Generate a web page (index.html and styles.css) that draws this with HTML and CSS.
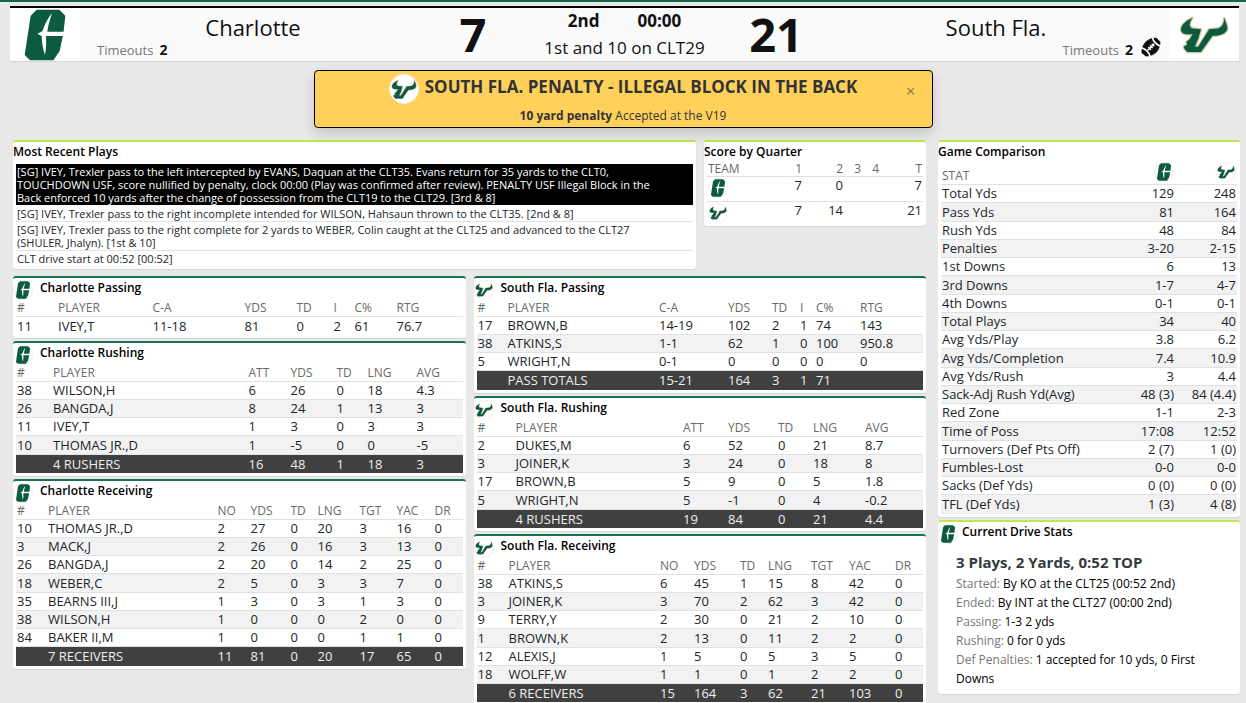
FILE: index.html
```html
<!DOCTYPE html>
<html lang="en">
<head>
<meta charset="utf-8">
<title>Charlotte vs South Fla.</title>
<link rel="stylesheet" href="styles.css">
</head>
<body>
<svg class="sprite" aria-hidden="true">
  <symbol id="clt" viewBox="74 26 126 156">
    <path fill="#0b5a41" d="M112 28H180L198 46L192 100L181 152L162 180H92L76 164L94 46Z"/>
    <path fill="#fff" d="M158 38Q139 62 129 93L114 100L127 107Q128 140 137 163Q142 140 140 107H200V94H144Q146 75 158 38Z"/>
  </symbol>
  <symbol id="usf" viewBox="2 8 146 112">
    <path class="bull" d="M41 14C26 20 6 34 8 50C10 61 24 64 42 61L34 76L24 84L26 92L16 98L18 104L26 114H66L80 94L100 66H112C128 64 144 56 143 42C142 34 138 26 134 14C134 30 128 40 116 45L90 47L76 70L58 98H48L58 76L66 47L42 45C30 40 31 30 41 14Z"/>
  </symbol>
  <symbol id="ball" viewBox="0 0 60 60">
    <path fill="#111" d="M2 48C-2 24 20 0 46 2L58 14C60 38 40 60 14 58Z"/>
    <path fill="none" stroke="#fff" stroke-width="5" d="M0 32Q22 38 28 60M34 0Q38 20 60 28"/>
    <path fill="none" stroke="#fff" stroke-width="4" d="M20 40L40 20M22 30L30 38M27 25L35 33M32 20L40 28"/>
  </symbol>
</svg>

<header class="scoreboard">
  <div class="team-logo"><svg class="logo-clt"><use href="#clt"/></svg></div>
  <div class="team">
    <h1 class="team-name">Charlotte</h1>
    <p class="timeouts">Timeouts <b>2</b></p>
  </div>
  <div class="score">7</div>
  <div class="situation">
    <p class="clock"><span>2nd</span><span>00:00</span></p>
    <p class="down">1st and 10 on CLT29</p>
  </div>
  <div class="score">21</div>
  <div class="team team-away">
    <h1 class="team-name">South Fla.</h1>
    <p class="timeouts">Timeouts <b>2</b> <svg class="ball" role="img" aria-label="Possession"><use href="#ball"/></svg></p>
  </div>
  <div class="team-logo"><svg class="logo-usf"><use href="#usf"/></svg></div>
</header>

<div class="alert" role="alert">
  <div class="alert-title"><span class="badge badge-lg"><svg><use href="#usf"/></svg></span><strong>SOUTH FLA. PENALTY - ILLEGAL BLOCK IN THE BACK</strong></div>
  <p class="alert-text"><b>10 yard penalty</b> Accepted at the V19</p>
  <button class="close" type="button" aria-label="Close">×</button>
</div>

<main class="page">
  <div class="main">
    <div class="top-row">
      <section class="panel lime">
        <h2>Most Recent Plays</h2>
        <ul class="plays">
          <li class="latest">[SG] IVEY, Trexler pass to the left intercepted by EVANS, Daquan at the CLT35. Evans return for 35 yards to the CLT0, TOUCHDOWN USF, score nullified by penalty, clock 00:00 (Play was confirmed after review). PENALTY USF Illegal Block in the Back enforced 10 yards after the change of possession from the CLT19 to the CLT29. [3rd &amp; 8]</li>
          <li>[SG] IVEY, Trexler pass to the right incomplete intended for WILSON, Hahsaun thrown to the CLT35. [2nd &amp; 8]</li>
          <li>[SG] IVEY, Trexler pass to the right complete for 2 yards to WEBER, Colin caught at the CLT25 and advanced to the CLT27 (SHULER, Jhalyn). [1st &amp; 10]</li>
          <li>CLT drive start at 00:52 [00:52]</li>
        </ul>
      </section>
      <section class="panel lime">
        <h2>Score by Quarter</h2>
        <table class="quarters">
          <thead><tr><th>TEAM</th><th>1</th><th>2</th><th>3</th><th>4</th><th>T</th></tr></thead>
          <tbody>
            <tr><td><span class="badge"><svg><use href="#clt"/></svg></span></td><td>7</td><td>0</td><td></td><td></td><td>7</td></tr>
            <tr><td><span class="badge"><svg><use href="#usf"/></svg></span></td><td>7</td><td>14</td><td></td><td></td><td>21</td></tr>
          </tbody>
        </table>
      </section>
    </div>

    <div class="teams-row">
      <div class="stack">
        <section class="panel">
          <h2><span class="badge"><svg><use href="#clt"/></svg></span>Charlotte Passing</h2>
          <table class="stats clt-pass">
            <thead><tr><th>#</th><th>PLAYER</th><th>C-A</th><th>YDS</th><th>TD</th><th>I</th><th>C%</th><th>RTG</th></tr></thead>
            <tbody><tr><td>11</td><td>IVEY,T</td><td>11-18</td><td>81</td><td>0</td><td>2</td><td>61</td><td>76.7</td></tr></tbody>
          </table>
        </section>
        <section class="panel">
          <h2><span class="badge"><svg><use href="#clt"/></svg></span>Charlotte Rushing</h2>
          <table class="stats clt-rush">
            <thead><tr><th>#</th><th>PLAYER</th><th>ATT</th><th>YDS</th><th>TD</th><th>LNG</th><th>AVG</th></tr></thead>
            <tbody>
              <tr><td>38</td><td>WILSON,H</td><td>6</td><td>26</td><td>0</td><td>18</td><td>4.3</td></tr>
              <tr><td>26</td><td>BANGDA,J</td><td>8</td><td>24</td><td>1</td><td>13</td><td>3</td></tr>
              <tr><td>11</td><td>IVEY,T</td><td>1</td><td>3</td><td>0</td><td>3</td><td>3</td></tr>
              <tr><td>10</td><td>THOMAS JR.,D</td><td>1</td><td>-5</td><td>0</td><td>0</td><td>-5</td></tr>
              <tr class="total"><td></td><td>4 RUSHERS</td><td>16</td><td>48</td><td>1</td><td>18</td><td>3</td></tr>
            </tbody>
          </table>
        </section>
        <section class="panel">
          <h2><span class="badge"><svg><use href="#clt"/></svg></span>Charlotte Receiving</h2>
          <table class="stats clt-rec">
            <thead><tr><th>#</th><th>PLAYER</th><th>NO</th><th>YDS</th><th>TD</th><th>LNG</th><th>TGT</th><th>YAC</th><th>DR</th></tr></thead>
            <tbody>
              <tr><td>10</td><td>THOMAS JR.,D</td><td>2</td><td>27</td><td>0</td><td>20</td><td>3</td><td>16</td><td>0</td></tr>
              <tr><td>3</td><td>MACK,J</td><td>2</td><td>26</td><td>0</td><td>16</td><td>3</td><td>13</td><td>0</td></tr>
              <tr><td>26</td><td>BANGDA,J</td><td>2</td><td>20</td><td>0</td><td>14</td><td>2</td><td>25</td><td>0</td></tr>
              <tr><td>18</td><td>WEBER,C</td><td>2</td><td>5</td><td>0</td><td>3</td><td>3</td><td>7</td><td>0</td></tr>
              <tr><td>35</td><td>BEARNS III,J</td><td>1</td><td>3</td><td>0</td><td>3</td><td>1</td><td>3</td><td>0</td></tr>
              <tr><td>38</td><td>WILSON,H</td><td>1</td><td>0</td><td>0</td><td>0</td><td>2</td><td>0</td><td>0</td></tr>
              <tr><td>84</td><td>BAKER II,M</td><td>1</td><td>0</td><td>0</td><td>0</td><td>1</td><td>1</td><td>0</td></tr>
              <tr class="total"><td></td><td>7 RECEIVERS</td><td>11</td><td>81</td><td>0</td><td>20</td><td>17</td><td>65</td><td>0</td></tr>
            </tbody>
          </table>
        </section>
      </div>

      <div class="stack">
        <section class="panel">
          <h2><span class="badge"><svg><use href="#usf"/></svg></span>South Fla. Passing</h2>
          <table class="stats usf-pass">
            <thead><tr><th>#</th><th>PLAYER</th><th>C-A</th><th>YDS</th><th>TD</th><th>I</th><th>C%</th><th>RTG</th></tr></thead>
            <tbody>
              <tr><td>17</td><td>BROWN,B</td><td>14-19</td><td>102</td><td>2</td><td>1</td><td>74</td><td>143</td></tr>
              <tr><td>38</td><td>ATKINS,S</td><td>1-1</td><td>62</td><td>1</td><td>0</td><td>100</td><td>950.8</td></tr>
              <tr><td>5</td><td>WRIGHT,N</td><td>0-1</td><td>0</td><td>0</td><td>0</td><td>0</td><td>0</td></tr>
              <tr class="total"><td></td><td>PASS TOTALS</td><td>15-21</td><td>164</td><td>3</td><td>1</td><td>71</td><td></td></tr>
            </tbody>
          </table>
        </section>
        <section class="panel">
          <h2><span class="badge"><svg><use href="#usf"/></svg></span>South Fla. Rushing</h2>
          <table class="stats usf-rush">
            <thead><tr><th>#</th><th>PLAYER</th><th>ATT</th><th>YDS</th><th>TD</th><th>LNG</th><th>AVG</th></tr></thead>
            <tbody>
              <tr><td>2</td><td>DUKES,M</td><td>6</td><td>52</td><td>0</td><td>21</td><td>8.7</td></tr>
              <tr><td>3</td><td>JOINER,K</td><td>3</td><td>24</td><td>0</td><td>18</td><td>8</td></tr>
              <tr><td>17</td><td>BROWN,B</td><td>5</td><td>9</td><td>0</td><td>5</td><td>1.8</td></tr>
              <tr><td>5</td><td>WRIGHT,N</td><td>5</td><td>-1</td><td>0</td><td>4</td><td>-0.2</td></tr>
              <tr class="total"><td></td><td>4 RUSHERS</td><td>19</td><td>84</td><td>0</td><td>21</td><td>4.4</td></tr>
            </tbody>
          </table>
        </section>
        <section class="panel">
          <h2><span class="badge"><svg><use href="#usf"/></svg></span>South Fla. Receiving</h2>
          <table class="stats usf-rec">
            <thead><tr><th>#</th><th>PLAYER</th><th>NO</th><th>YDS</th><th>TD</th><th>LNG</th><th>TGT</th><th>YAC</th><th>DR</th></tr></thead>
            <tbody>
              <tr><td>38</td><td>ATKINS,S</td><td>6</td><td>45</td><td>1</td><td>15</td><td>8</td><td>42</td><td>0</td></tr>
              <tr><td>3</td><td>JOINER,K</td><td>3</td><td>70</td><td>2</td><td>62</td><td>3</td><td>42</td><td>0</td></tr>
              <tr><td>9</td><td>TERRY,Y</td><td>2</td><td>30</td><td>0</td><td>21</td><td>2</td><td>10</td><td>0</td></tr>
              <tr><td>1</td><td>BROWN,K</td><td>2</td><td>13</td><td>0</td><td>11</td><td>2</td><td>2</td><td>0</td></tr>
              <tr><td>12</td><td>ALEXIS,J</td><td>1</td><td>5</td><td>0</td><td>5</td><td>3</td><td>5</td><td>0</td></tr>
              <tr><td>18</td><td>WOLFF,W</td><td>1</td><td>1</td><td>0</td><td>1</td><td>2</td><td>2</td><td>0</td></tr>
              <tr class="total"><td></td><td>6 RECEIVERS</td><td>15</td><td>164</td><td>3</td><td>62</td><td>21</td><td>103</td><td>0</td></tr>
            </tbody>
          </table>
        </section>
      </div>
    </div>
  </div>

  <aside class="stack">
    <section class="panel lime">
      <h2>Game Comparison</h2>
      <table class="stats compare">
        <thead><tr><th>STAT</th><th><span class="badge"><svg><use href="#clt"/></svg></span></th><th><span class="badge"><svg><use href="#usf"/></svg></span></th></tr></thead>
        <tbody>
          <tr><td>Total Yds</td><td>129</td><td>248</td></tr>
          <tr><td>Pass Yds</td><td>81</td><td>164</td></tr>
          <tr><td>Rush Yds</td><td>48</td><td>84</td></tr>
          <tr><td>Penalties</td><td>3-20</td><td>2-15</td></tr>
          <tr><td>1st Downs</td><td>6</td><td>13</td></tr>
          <tr><td>3rd Downs</td><td>1-7</td><td>4-7</td></tr>
          <tr><td>4th Downs</td><td>0-1</td><td>0-1</td></tr>
          <tr><td>Total Plays</td><td>34</td><td>40</td></tr>
          <tr><td>Avg Yds/Play</td><td>3.8</td><td>6.2</td></tr>
          <tr><td>Avg Yds/Completion</td><td>7.4</td><td>10.9</td></tr>
          <tr><td>Avg Yds/Rush</td><td>3</td><td>4.4</td></tr>
          <tr><td>Sack-Adj Rush Yd(Avg)</td><td>48 (3)</td><td>84 (4.4)</td></tr>
          <tr><td>Red Zone</td><td>1-1</td><td>2-3</td></tr>
          <tr><td>Time of Poss</td><td>17:08</td><td>12:52</td></tr>
          <tr><td>Turnovers (Def Pts Off)</td><td>2 (7)</td><td>1 (0)</td></tr>
          <tr><td>Fumbles-Lost</td><td>0-0</td><td>0-0</td></tr>
          <tr><td>Sacks (Def Yds)</td><td>0 (0)</td><td>0 (0)</td></tr>
          <tr><td>TFL (Def Yds)</td><td>1 (3)</td><td>4 (8)</td></tr>
        </tbody>
      </table>
    </section>
    <section class="panel lime">
      <h2 class="tight"><span class="badge"><svg><use href="#clt"/></svg></span>Current Drive Stats</h2>
      <div class="drive">
        <h3>3 Plays, 2 Yards, 0:52 TOP</h3>
        <p><span>Started:</span> By KO at the CLT25 (00:52 2nd)</p>
        <p><span>Ended:</span> By INT at the CLT27 (00:00 2nd)</p>
        <p><span>Passing:</span> 1-3 2 yds</p>
        <p><span>Rushing:</span> 0 for 0 yds</p>
        <p><span>Def Penalties:</span> 1 accepted for 10 yds, 0 First Downs</p>
      </div>
    </section>
  </aside>
</main>
</body>
</html>
```
FILE: styles.css
```css
* { box-sizing: border-box; }
body {
  margin: 0;
  border-top: 2px solid #156648;
  background: #e9e9e9;
  color: #212529;
  font: 13px/18px "Open Sans", "Noto Sans", sans-serif;
}
h1, h2, h3, p, ul { margin: 0; padding: 0; font-weight: inherit; }
svg { display: block; }
.sprite { display: none; }
.bull { fill: #0b5a41; stroke: #cfc49c; stroke-width: 7; paint-order: stroke; stroke-linejoin: round; }

/* scoreboard */
.scoreboard {
  display: grid;
  grid-template-columns: 70px 346fr 94fr 209fr 94fr 346fr 70px;
  margin: 4px 7px 0 10px;
  height: 55px;
  border-top: 2px solid #000;
  background: #fafafa;
  color: #111;
  box-shadow: 0 1px 1px #d8d8d8;
}
.team-logo { display: flex; align-items: center; justify-content: center; background: #fff; }
.logo-clt { width: 42px; height: 52px; }
.logo-usf { width: 50px; height: 40px; }
.team { display: flex; flex-direction: column; }
.team-name { font-size: 22px; line-height: 24px; padding: 7px 0 1px; text-align: center; }
.timeouts { display: flex; align-items: center; gap: 6px; height: 20px; padding-left: 17px; font-size: 13px; color: #777; }
.timeouts b { font-size: 14px; color: #111; }
.team-away .timeouts { justify-content: flex-end; padding: 0 8px 0 0; }
.ball { width: 20px; height: 20px; margin: 0 0 6px 2px; }
.score { font-size: 47px; font-weight: 700; line-height: 52px; text-align: center; }
.situation { display: flex; flex-direction: column; align-items: center; gap: 4px; white-space: nowrap; }
.clock { display: flex; gap: 38px; font-size: 17px; line-height: 26px; font-weight: 700; }
.down { font-size: 17px; line-height: 20px; }

/* penalty alert */
.alert {
  position: relative;
  width: 619px;
  max-width: 100%;
  margin: 9px auto 12px;
  padding: 3px 0 2px;
  border: 1px solid #000;
  border-radius: 4px;
  background: #ffd15b;
  color: #333;
  text-align: center;
  box-shadow: 0 6px 14px rgba(0, 0, 0, .16);
}
.alert-title { display: flex; align-items: center; justify-content: center; gap: 6px; font-size: 17px; line-height: 30px; }
.alert-title strong { line-height: 26px; padding-bottom: 4px; }
.alert-text { padding-top: 2px; font-size: 12px; line-height: 19px; }
.close {
  position: absolute;
  top: 10px;
  right: 16px;
  padding: 0;
  border: 0;
  background: none;
  color: #8b7638;
  font: 17px/20px "Open Sans", sans-serif;
}

/* panels */
.page {
  display: grid;
  grid-template-columns: 913fr 302fr;
  align-items: start;
  gap: 12px;
  padding: 0 6px 0 13px;
}
.main { display: flex; flex-direction: column; gap: 7px; }
.top-row { display: grid; grid-template-columns: 683fr 222fr; align-items: start; gap: 8px; }
.teams-row { display: grid; grid-template-columns: 1fr 1fr; align-items: start; gap: 8px; }
.stack { display: flex; flex-direction: column; gap: 3px; min-width: 0; }
.panel {
  padding: 0 3px 3px;
  border-top: 2px solid #1a7350;
  border-radius: 3px;
  background: #fff;
  box-shadow: 0 1px 1px #d5d5d5;
}
.lime { border-top-color: #bfe94a; }
.panel h2 {
  display: flex;
  gap: 7px;
  margin-left: -3px;
  height: 20px;
  color: #000;
  font-size: 12px;
  font-weight: 600;
  line-height: 20px;
}
.panel h2.tight { gap: 4px; }
.badge {
  display: inline-flex;
  flex: none;
  align-items: center;
  justify-content: center;
  width: 20px;
  height: 20px;
  border: 1px solid #f0f0f0;
  border-radius: 50%;
  background: #fff;
}
.badge svg { width: 18px; height: 18px; }
.badge .bull { stroke-width: 3; }
.panel h2 .badge { margin-top: 2px; }
.badge-lg { width: 30px; height: 30px; }
.badge-lg svg { width: 26px; height: 21px; }

.plays { margin-top: 2px; list-style: none; font-size: 11px; line-height: 13px; }
.plays li { padding: 1px 24px 1px 1px; border-bottom: 1px solid #dee2e6; }
.plays li:last-child { border-bottom: 0; }
.plays .latest { margin-bottom: 1px; border: 0; background: #000; color: #fff; }

/* tables */
table { width: 100%; border-collapse: separate; border-spacing: 0; table-layout: fixed; }
th, td { padding: 0 1px; height: 18px; font-size: 13px; line-height: 17px; text-align: left; white-space: nowrap; border-bottom: 1px solid #dee2e6; }
th { height: 19px; font-size: 12px; font-weight: 400; color: #6a6a6a; vertical-align: bottom; }
.stats td { vertical-align: middle; }
.stats tbody tr:nth-child(4n) td { height: 19px; }
.stats tbody tr:nth-child(even) { background: #f2f2f2; }
.stats tbody tr:last-child td { border-bottom: 0; }
.stats tbody tr.total { background: #404040; color: #eee; }

.clt-pass th:nth-child(1) { width: 41px; }
.clt-pass th:nth-child(3) { width: 92px; }
.clt-pass th:nth-child(4) { width: 52px; }
.clt-pass th:nth-child(5) { width: 37px; }
.clt-pass th:nth-child(6) { width: 21px; }
.clt-pass th:nth-child(7) { width: 42px; }
.clt-pass th:nth-child(8) { width: 67px; }

.clt-rush th:nth-child(1) { width: 36px; }
.clt-rush th:nth-child(3) { width: 42px; }
.clt-rush th:nth-child(4) { width: 46px; }
.clt-rush th:nth-child(5) { width: 31px; }
.clt-rush th:nth-child(6) { width: 49px; }
.clt-rush th:nth-child(7) { width: 47px; }

.clt-rec th:nth-child(1) { width: 31px; }
.clt-rec th:nth-child(3) { width: 33px; }
.clt-rec th:nth-child(4) { width: 40px; }
.clt-rec th:nth-child(5) { width: 27px; }
.clt-rec th:nth-child(6) { width: 42px; }
.clt-rec th:nth-child(7) { width: 37px; }
.clt-rec th:nth-child(8) { width: 38px; }
.clt-rec th:nth-child(9) { width: 29px; }

.usf-pass th:nth-child(1) { width: 30px; }
.usf-pass th:nth-child(3) { width: 69px; }
.usf-pass th:nth-child(4) { width: 44px; }
.usf-pass th:nth-child(5) { width: 28px; }
.usf-pass th:nth-child(6) { width: 16px; }
.usf-pass th:nth-child(7) { width: 44px; }
.usf-pass th:nth-child(8) { width: 64px; }

.usf-rush th:nth-child(1) { width: 38px; }
.usf-rush th:nth-child(3) { width: 45px; }
.usf-rush th:nth-child(4) { width: 50px; }
.usf-rush th:nth-child(5) { width: 35px; }
.usf-rush th:nth-child(6) { width: 52px; }
.usf-rush th:nth-child(7) { width: 59px; }

.usf-rec th:nth-child(1) { width: 31px; }
.usf-rec th:nth-child(3) { width: 34px; }
.usf-rec th:nth-child(4) { width: 46px; }
.usf-rec th:nth-child(5) { width: 28px; }
.usf-rec th:nth-child(6) { width: 43px; }
.usf-rec th:nth-child(7) { width: 38px; }
.usf-rec th:nth-child(8) { width: 46px; }
.usf-rec th:nth-child(9) { width: 29px; }

.compare th { height: 23px; }
.compare th:nth-child(2) { width: 60px; }
.compare th:nth-child(3) { width: 62px; }
.compare th:not(:first-child), .compare td:not(:first-child) { text-align: right; }
.compare .badge { vertical-align: bottom; margin-bottom: 2px; }
.compare tbody tr:nth-child(4n) td { height: 18px; }
.compare tbody tr:nth-child(4n+2) td { height: 19px; }

.quarters { font-size: 13px; }
.quarters th { height: 15px; line-height: 14px; }
.quarters td { height: 25px; vertical-align: top; }
.quarters .badge { margin-top: 1px; vertical-align: top; }
.quarters tr:last-child td { height: 21px; border-bottom: 0; }
.quarters th:not(:first-child), .quarters td:not(:first-child) { text-align: right; }
.quarters thead th { border-bottom: 1px solid #dee2e6; }
.quarters th:nth-child(2) { width: 46px; }
.quarters th:nth-child(3) { width: 41px; }
.quarters th:nth-child(4), .quarters th:nth-child(5) { width: 18px; }
.quarters th:nth-child(6) { width: 43px; }

/* current drive */
.drive { padding: 8px 15px 3px; color: #000; font-size: 12px; line-height: 19px; }
.drive h3 { color: #343a40; font-size: 15px; font-weight: 700; line-height: 24px; }
.drive span { color: #777; }
```
